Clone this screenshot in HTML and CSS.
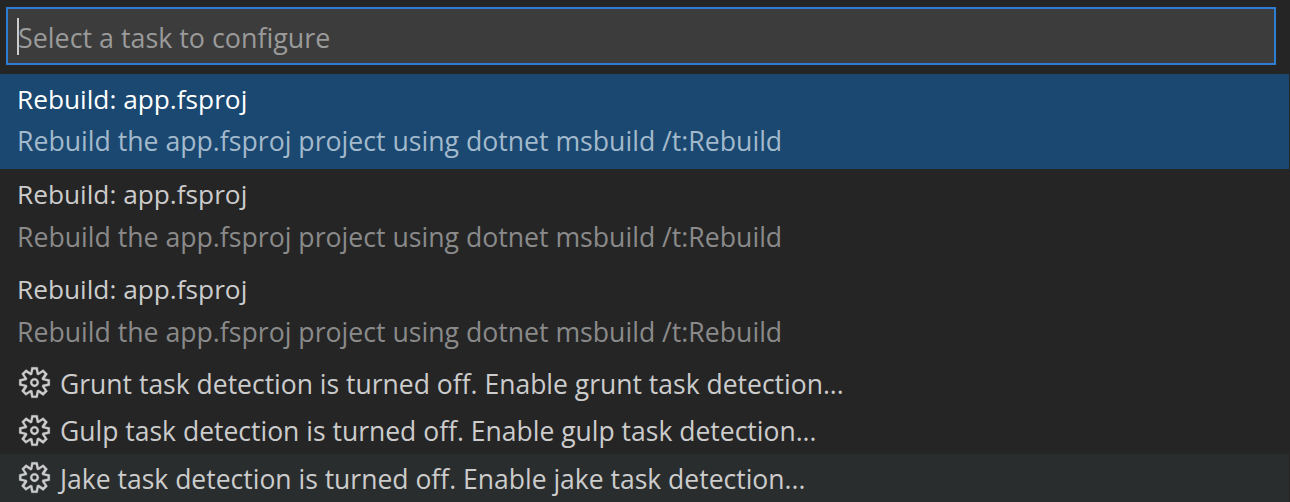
FILE: index.html
```html
<!DOCTYPE html>
<html lang="en">
<head>
<meta charset="utf-8">
<title>Select a task to configure</title>
<link rel="stylesheet" href="styles.css">
</head>
<body>
<svg class="defs" width="0" height="0" aria-hidden="true"><defs><symbol id="gear" viewBox="0 0 16 16"><path fill-rule="evenodd" clip-rule="evenodd" d="M9.1 4.4L8.6 2H7.4l-.5 2.4-.7.3-2-1.3-.9.8 1.3 2-.2.7-2.4.5v1.2l2.4.5.3.8-1.3 2 .8.8 2-1.3.8.3.4 2.3h1.2l.5-2.4.8-.3 2 1.3.8-.8-1.3-2 .3-.8 2.3-.4V7.4l-2.4-.5-.3-.8 1.3-2-.8-.8-2 1.3-.7-.2zM9.4 1l.5 2.4L12 2.1l2 2-1.4 2.1 2.4.4v2.8l-2.4.5L14 12l-2 2-2.1-1.4-.5 2.4H6.6l-.5-2.4L4 13.9l-2-2 1.4-2.1L1 9.4V6.6l2.4-.5L2.1 4l2-2 2.1 1.4.4-2.4h2.8zm.6 7c0 1.1-.9 2-2 2s-2-.9-2-2 .9-2 2-2 2 .9 2 2zM8 9c.6 0 1-.4 1-1s-.4-1-1-1-1 .4-1 1 .4 1 1 1z"/></symbol></defs></svg>
<main class="picker">
  <div class="input-wrap">
    <div class="input"><span class="caret"></span><span class="placeholder">Select a task to configure</span></div>
  </div>
  <ul class="list">
    <li class="row double selected"><span class="label">Rebuild: app.fsproj</span><span class="detail">Rebuild the app.fsproj project using dotnet msbuild /t:Rebuild</span></li>
    <li class="row double"><span class="label">Rebuild: app.fsproj</span><span class="detail">Rebuild the app.fsproj project using dotnet msbuild /t:Rebuild</span></li>
    <li class="row double"><span class="label">Rebuild: app.fsproj</span><span class="detail">Rebuild the app.fsproj project using dotnet msbuild /t:Rebuild</span></li>
    <li class="row single"><svg class="icon"><use href="#gear"/></svg><span class="text">Grunt task detection is turned off. Enable grunt task detection...</span></li>
    <li class="row single"><svg class="icon"><use href="#gear"/></svg><span class="text">Gulp task detection is turned off. Enable gulp task detection...</span></li>
    <li class="row single hover"><svg class="icon"><use href="#gear"/></svg><span class="text">Jake task detection is turned off. Enable jake task detection...</span></li>
  </ul>
</main>
</body>
</html>
```
FILE: styles.css
```css
* { box-sizing: border-box; }
html, body { margin: 0; height: 502px; overflow: hidden; background: #252526; }
body { font-family: "Open Sans", "Noto Sans", sans-serif; font-size: 26.5px; color: #cccccc; }
.defs { position: absolute; }
.picker { display: flex; flex-direction: column; width: 1289px; }
.input-wrap { padding: 7px 13px 9px 6px; }
.input { position: relative; display: flex; align-items: center; height: 58px; padding-left: 10px; background: #3c3c3c; border: 2px solid #2e7dd0; }
.caret { position: absolute; left: 9px; top: 9px; width: 2px; height: 37px; background: #cccccc; }
.placeholder { color: #9a9a9a; font-size: 26.85px; padding-top: 3px; }
.list { list-style: none; margin: 0; padding: 0; }
.row { padding-left: 17px; white-space: nowrap; }
.double { display: flex; flex-direction: column; height: 95px; padding-top: 9px; gap: 11px; line-height: 32px; color: #cccccc; }
.label { font-size: 26.25px; }
.detail { font-size: 26.65px; color: #8a8a8a; }
.selected { gap: 10px; background: #1a4870; }
.selected .label { color: #ffffff; }
.selected .detail { color: #a3b9cc; }
.single { display: flex; align-items: center; height: 47.5px; }
.icon { width: 35px; height: 35px; margin-right: 8px; fill: #cccccc; stroke: #cccccc; stroke-width: 0.12; flex: none; }
.text { font-size: 26.5px; padding-top: 2px; }
.hover { background: #2a2d2e; }
```
